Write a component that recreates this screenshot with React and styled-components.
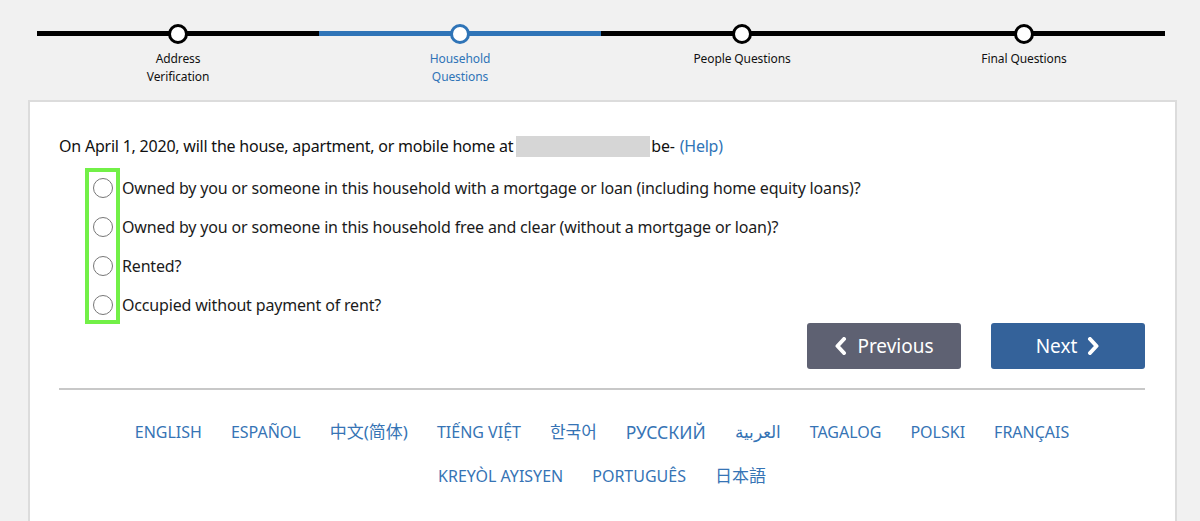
import React, { useState } from "react"
import styled, { createGlobalStyle } from "styled-components"

const steps = [
  { label: "Address Verification", done: true },
  { label: "Household Questions", active: true },
  { label: "People Questions" },
  { label: "Final Questions" },
]

const options = [
  "Owned by you or someone in this household with a mortgage or loan (including home equity loans)?",
  "Owned by you or someone in this household free and clear (without a mortgage or loan)?",
  "Rented?",
  "Occupied without payment of rent?",
]

const languages = [
  ["ENGLISH", "ESPAÑOL", "中文(简体)", "TIẾNG VIỆT", "한국어", "РУССКИЙ", "العربية", "TAGALOG", "POLSKI", "FRANÇAIS"],
  ["KREYÒL AYISYEN", "PORTUGUÊS", "日本語"],
]

const Chevron = ({ dir }) => (
  <svg width="14" height="18" viewBox="0 0 14 18">
    <polyline
      points={dir === "left" ? "10,2 3.5,9 10,16" : "4,2 10.5,9 4,16"}
      fill="none"
      stroke="#fff"
      strokeWidth="4"
      strokeLinecap="round"
      strokeLinejoin="round"
    />
  </svg>
)

const langSize = lang => {
  if (lang === "РУССКИЙ") return "17.5px"
  if (/[^\u0000-\u04ff\u1e00-\u1eff]/.test(lang)) return "17px"
  return "16px"
}

function App() {
  const [choice, setChoice] = useState(null)
  return (
    <>
      <GlobalStyle />
      <Stepper>
        {steps.map(step => (
          <Step key={step.label} active={step.active}>
            <Dot active={step.active} />
            <StepLabel active={step.active}>{step.label}</StepLabel>
          </Step>
        ))}
      </Stepper>
      <Card>
        <Question>
          On April 1, 2020, will the house, apartment, or mobile home at <Redacted /> be-{" "}
          <HelpLink href="#">(Help)</HelpLink>
        </Question>
        <Options>
          <Highlight />
          {options.map((text, i) => (
            <Option key={text} onClick={() => setChoice(i)}>
              <Radio checked={choice === i} />
              {text}
            </Option>
          ))}
        </Options>
        <Actions>
          <NavButton kind="prev">
            <Chevron dir="left" /> Previous
          </NavButton>
          <NavButton kind="next">
            Next <Chevron dir="right" />
          </NavButton>
        </Actions>
        <Divider />
        <Languages>
          {languages.map((row, r) => (
            <LangRow key={r}>
              {row.map(lang => (
                <LangLink key={lang} href="#" size={langSize(lang)}>
                  {lang}
                </LangLink>
              ))}
            </LangRow>
          ))}
        </Languages>
      </Card>
    </>
  )
}

/// styled components

const GlobalStyle = createGlobalStyle`
  html, body {
    margin: 0;
    background: #f1f1f1;
    font-family: "Noto Sans", "Noto Sans CJK SC", sans-serif;
    color: #1b1b1b;
  }
  * {
    box-sizing: border-box;
  }
`
const Stepper = styled.div`
  display: grid;
  grid-template-columns: repeat(4, 282px);
  margin: 0 0 0 37px;
  padding-top: 24px;
  height: 100px;
`
const Step = styled.div`
  position: relative;
  display: flex;
  flex-direction: column;
  align-items: center;
  &::before {
    content: "";
    position: absolute;
    top: 7px;
    left: 0;
    right: 0;
    height: 5px;
    background: ${props => (props.active ? "#2f74b7" : "#000")};
  }
`
const Dot = styled.span`
  position: relative;
  width: 20px;
  height: 20px;
  border-radius: 50%;
  background: #fff;
  border: 3px solid ${props => (props.active ? "#2f74b7" : "#000")};
`
const StepLabel = styled.span`
  max-width: 100px;
  margin-top: 6px;
  text-align: center;
  font-size: 12px;
  line-height: 18px;
  letter-spacing: -0.1px;
  color: ${props => (props.active ? "#2f74b7" : "#111")};
`
const Card = styled.div`
  margin: 0 23px 0 28px;
  background: #fff;
  border: 2px solid #dcdcdc;
  border-bottom: none;
  padding: 33px 30px 16px 29px;
  min-height: calc(100vh - 100px);
`
const Question = styled.p`
  margin: 0;
  font-size: 16px;
  line-height: 22px;
  letter-spacing: -0.22px;
  display: flex;
  align-items: center;
  color: #111;
`
const Redacted = styled.span`
  display: inline-block;
  width: 134px;
  height: 21px;
  background: #d6d6d6;
  margin: 0 1px 0 3px;
`
const HelpLink = styled.a`
  color: #2f74b7;
  text-decoration: none;
  margin-left: 5px;
`
const Options = styled.div`
  position: relative;
  margin: 19px 0 0 30px;
  display: flex;
  flex-direction: column;
  gap: 15px;
`
const Highlight = styled.div`
  position: absolute;
  left: -4px;
  top: -8px;
  width: 35px;
  height: 156px;
  border: 4px solid #72f047;
`
const Option = styled.label`
  display: flex;
  align-items: center;
  gap: 9px;
  font-size: 16px;
  line-height: 24px;
  letter-spacing: -0.17px;
  color: #1b1b1b;
  cursor: pointer;
`
const Radio = styled.span`
  width: 20px;
  height: 20px;
  border-radius: 50%;
  border: 1px solid #777;
  margin-left: 4px;
  background: ${props => (props.checked ? "radial-gradient(#2f74b7 45%, #fff 50%)" : "#fff")};
`
const Actions = styled.div`
  display: flex;
  justify-content: flex-end;
  gap: 30px;
  margin-top: 6px;
`
const NavButton = styled.button`
  width: 154px;
  height: 46px;
  border: none;
  border-radius: 3px;
  display: flex;
  align-items: center;
  justify-content: center;
  gap: 9px;
  font-family: inherit;
  font-size: 19px;
  color: #fff;
  background: ${props => (props.kind === "next" ? "#34629a" : "#5e6172")};
  cursor: pointer;
`
const Divider = styled.hr`
  margin: 19px 0 0;
  border: none;
  height: 2px;
  background: #c8c8c8;
`
const Languages = styled.div`
  margin-top: 29px;
  display: flex;
  flex-direction: column;
  gap: 18px;
`
const LangRow = styled.div`
  display: flex;
  justify-content: center;
  gap: 29px;
`
const LangLink = styled.a`
  color: #3674b5;
  text-decoration: none;
  font-size: ${props => props.size};
  line-height: 26px;
`

export default App
